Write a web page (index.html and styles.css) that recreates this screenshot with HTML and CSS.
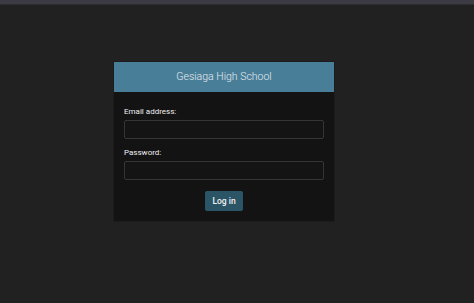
FILE: index.html
```html
<!DOCTYPE html>
<html lang="en">
<head>
    <meta charset="UTF-8">
    <meta name="viewport" content="width=device-width, initial-scale=1.0">
    <title>Gesiaga High School</title>
    <link rel="stylesheet" href="styles.css">
</head>
<body>
    <div class="topbar"></div>
    <div class="page">
        <div class="card">
            <div class="card-header">Gesiaga High School</div>
            <form class="card-body" onsubmit="return false">
                <label for="email">Email address:</label>
                <input type="email" id="email">
                <label for="password">Password:</label>
                <input type="password" id="password">
                <button type="submit">Log in</button>
            </form>
        </div>
    </div>
</body>
</html>
```

FILE: styles.css
```css
body {
    font-family: Roboto, "Liberation Sans", sans-serif;
    margin: 0;
    background-color: #212121;
    color: #e6e6e6;
}
.topbar {
    height: 4px;
    background: #3c3b43;
    border-bottom: 1px solid #2b2b30;
}
.page {
    padding-top: 56px;
    padding-left: 113px;
}
.card {
    width: 222px;
    background: #131313;
    border: 1px solid #1c1c1c;
    box-sizing: border-box;
}
.card-header {
    height: 30px;
    line-height: 30px;
    background: #497e99;
    text-align: center;
    font-size: 10.5px;
    font-weight: 300;
    color: #e4ebef;
}
.card-body {
    display: flex;
    flex-direction: column;
    padding: 15px 10px 10px 10px;
}
label {
    font-size: 8px;
    margin-bottom: 4px;
    color: #f0f0f0;
}
input {
    height: 19px;
    margin: 0 0 9px 0;
    background: #141414;
    border: 1px solid #353535;
    border-radius: 2px;
    box-sizing: border-box;
    color: #ddd;
}
button {
    align-self: center;
    margin-top: 2px;
    width: 38px;
    height: 20px;
    padding: 0;
    background-color: #2b5466;
    color: #f2f2f2;
    border: none;
    border-radius: 2px;
    font-family: Roboto, "Liberation Sans", sans-serif;
    font-size: 8.5px;
    font-weight: 500;
    cursor: pointer;
}
```
